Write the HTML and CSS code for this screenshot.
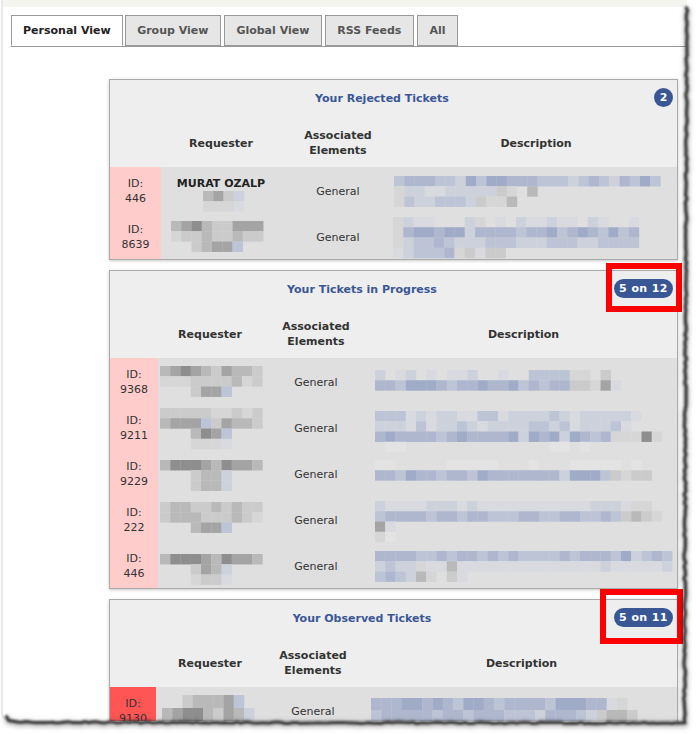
FILE: index.html
```html
<!DOCTYPE html>
<html lang="en">
<head>
<meta charset="utf-8">
<title>Personal View</title>
<link rel="stylesheet" href="styles.css">
</head>
<body>
<div class="sheet">
  <div class="strip"></div>
  <nav class="tabs">
    <a class="tab active">Personal View</a>
    <a class="tab">Group View</a>
    <a class="tab">Global View</a>
    <a class="tab">RSS Feeds</a>
    <a class="tab">All</a>
  </nav>

  <section class="card first">
    <header class="card-head"><h2>Your Rejected Tickets</h2><span class="badge round">2</span></header>
    <table class="tickets t1">
      <colgroup><col class="c-id"><col class="c-req"><col class="c-assoc"><col></colgroup>
      <thead><tr><th></th><th>Requester</th><th class="two">Associated<br>Elements</th><th>Description</th></tr></thead>
      <tbody>
        <tr>
          <td class="id">ID:<br>446</td>
          <td class="req"><div class="name">MURAT OZALP</div><svg class="mosaic short" data-x="42" data-y="0" data-rows="rqsd|ttte"></svg></td>
          <td class="gen">General</td>
          <td><svg class="mosaic" data-x="-1" data-y="9" data-rows="cbbbccdacaabbbcccdcbcdbcac|tddeedddddst.r|tcddcccdsttr"></svg></td>
        </tr>
        <tr>
          <td class="id">ID:<br>8639</td>
          <td><svg class="mosaic" data-x="10" data-y="8" data-rows="rqprssqqq|tssrssrss|..srqqc"></svg></td>
          <td class="gen">General</td>
          <td><svg class="mosaic" data-x="-2" data-y="4" data-rows="tdee...dt.e.deedee.de..e|tbaabaadbbbbcbbacbabcacb|tdccbcdddcccdddcccddcccc|edcccbtsess"></svg></td>
        </tr>
      </tbody>
    </table>
  </section>

  <section class="card">
    <header class="card-head"><h2>Your Tickets in Progress</h2><span class="badge">5 on 12</span></header>
    <table class="tickets t2">
      <colgroup><col class="c-id"><col class="c-req"><col class="c-assoc"><col></colgroup>
      <thead><tr><th></th><th>Requester</th><th class="two">Associated<br>Elements</th><th>Description</th></tr></thead>
      <tbody>
        <tr>
          <td class="id">ID:<br>9368</td>
          <td><svg class="mosaic" data-x="2" data-y="8" data-rows="rqpqrsqrrs|tttssssrts|...sqqc"></svg></td>
          <td class="gen">General</td>
          <td><svg class="mosaic" data-x="5" data-y="12" data-rows="d.ed.e.eed..e..cccctt.s.|bbcaaabcbbabbacbcbbsstqe"></svg></td>
        </tr>
        <tr>
          <td class="id">ID:<br>9211</td>
          <td><svg class="mosaic" data-x="2" data-y="4" data-rows="sssssttsts|rqqqcsqrrs|...rpqc|...ttte"></svg></td>
          <td class="gen">General</td>
          <td><svg class="mosaic" data-x="5" data-y="7" data-rows="cccededdeecceddddcdeddddde|ddde cedd cdeddddccdcedddce|babbbbcbabbbbadabadabcbtttpt|.ll..............ll.l"></svg></td>
        </tr>
        <tr>
          <td class="id">ID:<br>9229</td>
          <td><svg class="mosaic" data-x="2" data-y="10" data-rows="rpppqrpqqr|...srrd|...srrd"></svg></td>
          <td class="gen">General</td>
          <td><svg class="mosaic" data-x="5" data-y="10" data-rows="ll.....lllll...l...lllll.l.|bbcabbcbbcabbbbbbbdaaacstss"></svg></td>
        </tr>
        <tr>
          <td class="id">ID:<br>222</td>
          <td><svg class="mosaic" data-x="2" data-y="6" data-rows="srrssrsrss|srrrsssrst|...rqqc"></svg></td>
          <td class="gen">General</td>
          <td><svg class="mosaic" data-x="5" data-y="5" data-rows="deeeedddedeeeeeeeeeeedddett|cbbbbcbbcbbcccbbccbbccbcsrst|qe|tl"></svg></td>
        </tr>
        <tr>
          <td class="id">ID:<br>446</td>
          <td><svg class="mosaic" data-x="2" data-y="12" data-rows="rpppqrpqqr|...sqrd|...tsse"></svg></td>
          <td class="gen">General</td>
          <td><svg class="mosaic" data-x="5" data-y="9" data-rows="bbbbccbcbbcbcbccccbcbbbcadcbc|dcddteereeeeeeeeeeeeeedeeeeed|cbcdrt.se"></svg></td>
        </tr>
      </tbody>
    </table>
  </section>

  <section class="card">
    <header class="card-head"><h2>Your Observed Tickets</h2><span class="badge">5 on 11</span></header>
    <table class="tickets t3">
      <colgroup><col class="c-id"><col class="c-req"><col class="c-assoc"><col></colgroup>
      <thead><tr><th></th><th>Requester</th><th class="two">Associated<br>Elements</th><th class="desc-head">Description</th></tr></thead>
      <tbody>
        <tr>
          <td class="id hot">ID:<br>9130</td>
          <td><svg class="mosaic" data-x="6" data-y="8" data-h="13" data-rows="..srrrqc|rqpprsqrd"></svg></td>
          <td class="gen">General</td>
          <td><svg class="mosaic" data-x="9" data-y="11" data-h="12" data-rows="bbbaababcaabcbbbbcaaabbet|cbbbbbcbbcbbbcccdbbbcdsrrs"></svg></td>
        </tr>
      </tbody>
    </table>
  </section>

  <div class="mark mark-a"></div>
  <div class="mark mark-b"></div>
</div>
<svg class="torn" id="torn" viewBox="0 0 697 734" aria-hidden="true"></svg>
<script src="mosaic.js"></script>
</body>
</html>
```

FILE: styles.css
```css
* { box-sizing: border-box; }
html, body { margin: 0; height: 734px; overflow: hidden; background: #fff; }
body { font: 11px/15px "DejaVu Sans", sans-serif; color: #333; position: relative; }

.sheet { position: relative; width: 686px; height: 721px; overflow: hidden; background: #fff; border-left: 2px solid #e8e8e8; margin-left: 1px; border-radius: 0 0 0 8px; }
.strip { height: 7px; background: #f5f5f0; margin-left: -3px; }

.tabs { display: flex; gap: 2px; height: 31px; margin: 9px 0 32px 8px; border-bottom: 1px solid #999; align-items: flex-end; }
.tab { height: 31px; padding: 0 11.5px; display: flex; align-items: center; margin-right: 1px; font-weight: 700; color: #555; background: #e6e6e6; border: 1px solid #999; }
.tab.active { padding: 0 11px; color: #222; background: #fff; border-bottom-color: #fff; margin-right: 0; }

.card { width: 569px; margin: 10px 0 0 106px; border: 1px solid #aaa; background: #eee; box-shadow: 0 1px 3px rgba(0,0,0,.22); }
.card.first { margin-top: 0; }
.card-head { display: flex; align-items: flex-start; height: 38px; padding: 8px 4px 0 0; }
.card-head h2 { flex: 1; margin: 0; padding-top: 1px; font-size: 11px; line-height: 19px; font-weight: 700; text-align: center; color: #3a5795; }
.badge { width: 59px; height: 19px; border-radius: 10px; background: #3a5795; color: #fff; font-weight: 700; line-height: 19px; text-align: center; letter-spacing: .4px; }
.badge.round { width: 19px; letter-spacing: 0; }

.tickets { width: 567px; table-layout: fixed; border-collapse: collapse; }
.tickets th { height: 49px; padding: 2px 0 0; font-weight: 700; color: #333; text-align: center; vertical-align: middle; }
.tickets th.two { padding-top: 0; }
.tickets td { height: 46px; padding: 1px 0 0; background: #dfdfdf; text-align: center; vertical-align: middle; }
.tickets td.gen { padding-top: 3px; }
.tickets td.id { background: #fcc; }
.tickets td.hot { background: #f55; }
.tickets td.req { vertical-align: top; padding-top: 0; }
.name { padding-top: 9px; font-weight: 700; color: #222; }

.t1 .c-id { width: 51px; } .t1 .c-req { width: 120px; } .t1 .c-assoc { width: 114px; }
.t2 .c-id { width: 48px; } .t2 .c-req { width: 104px; } .t2 .c-assoc { width: 108px; }
.t3 .c-id { width: 46px; } .t3 .c-req { width: 108px; } .t3 .c-assoc { width: 98px; }
.tickets th.desc-head { padding-left: 4px; }

.mosaic { display: block; width: 100%; height: 46px; margin-top: -1px; filter: blur(.6px); overflow: visible; }
.mosaic.short { height: 22px; margin-top: 0; }

.mark { position: absolute; border: 6px solid #f00; }
.mark-a { left: 603px; top: 263px; width: 76px; height: 49px; }
.mark-b { left: 597px; top: 589px; width: 83px; height: 55px; }

.torn { position: absolute; left: 0; top: 0; width: 697px; height: 734px; pointer-events: none; }
```

FILE: mosaic.js
```js
var NS = 'http://www.w3.org/2000/svg';
var palette = {
  a: '#a0abc8', b: '#aeb7ce', c: '#bdc4d5', d: '#cdd1dc', e: '#d8dae0',
  p: '#8e8e8e', q: '#a4a4a4', r: '#b9b9b9', s: '#cbcbcb', t: '#d6d6d6', l: '#e3e3e3'
};
var CELL = 10.25;

function el(parent, name, attrs) {
  var node = document.createElementNS(NS, name);
  for (var key in attrs) node.setAttribute(key, attrs[key]);
  parent.appendChild(node);
  return node;
}

document.querySelectorAll('.mosaic').forEach(function (svg) {
  var x0 = +svg.dataset.x, y0 = +svg.dataset.y, h = +(svg.dataset.h || CELL);
  svg.dataset.rows.split('|').forEach(function (row, r) {
    row.replace(/ /g, '').split('').forEach(function (ch, c) {
      if (!palette[ch]) return;
      el(svg, 'rect', { x: x0 + c * CELL, y: y0 + r * h, width: CELL + .2, height: h + .2, fill: palette[ch] });
    });
  });
});

/* torn paper edge along the right and bottom of the sheet */
var seed = 7;
function rnd() { seed = (seed * 16807) % 2147483647; return seed / 2147483647; }

var pts = [], y, x;
for (y = 6; y < 722; y += 4) pts.push([686 - (y / 722) * 2.5 + (rnd() - .5) * 1.8, y]);
for (x = 684; x > 12; x -= 4) pts.push([x, 722.5 - (684 - x) / 672 * .8 + (rnd() - .5) * 1.4]);
pts.push([8, 720], [5, 715]);
var d = 'M' + pts.map(function (p) { return p[0].toFixed(1) + ' ' + p[1].toFixed(1); }).join('L');

var torn = document.getElementById('torn');
var defs = el(torn, 'defs', {});
var f1 = el(defs, 'filter', { id: 'soft', x: '-5%', y: '-5%', width: '110%', height: '110%' });
el(f1, 'feGaussianBlur', { stdDeviation: '2.6' });
var f2 = el(defs, 'filter', { id: 'edge', x: '-5%', y: '-5%', width: '110%', height: '110%' });
el(f2, 'feGaussianBlur', { stdDeviation: '.8' });
el(torn, 'path', { d: d, fill: 'none', stroke: '#000', 'stroke-opacity': '.3', 'stroke-width': '5', filter: 'url(#soft)', transform: 'translate(1 2)' });
el(torn, 'path', { d: d, fill: 'none', stroke: '#3a3a3a', 'stroke-width': '3.2', filter: 'url(#edge)', transform: 'translate(.8 .6)' });
```
